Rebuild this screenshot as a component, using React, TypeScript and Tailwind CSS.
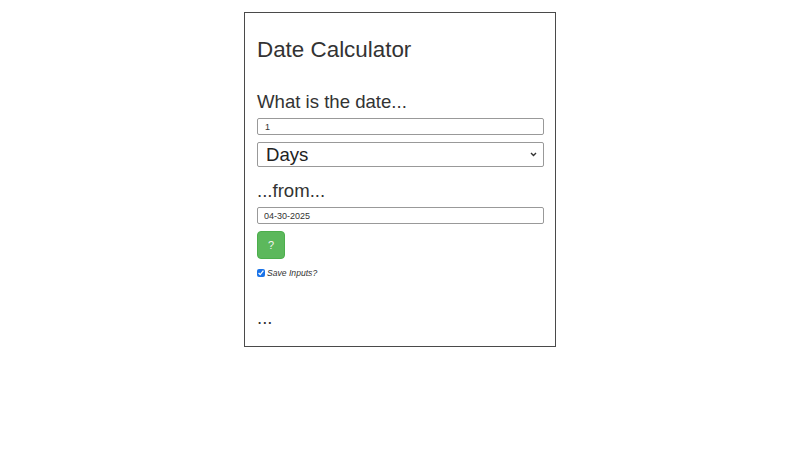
import React from "react";

export default function App() {
  return (
    <div className="w-[800px] h-[450px] bg-white" style={{ fontFamily: '"Liberation Sans", Arial, sans-serif' }}>
      <div className="mx-auto mt-[12px] w-[312px] border border-[#4a4a4a] px-[12px] pb-[18px] text-[#333] flex flex-col items-stretch">
        <h1 className="mt-[24px] text-[22.4px] leading-[26px] h-[26px]">Date Calculator</h1>
        <div className="mt-[28px] text-[18.6px] leading-[21px] h-[21px]">What is the date...</div>
        <input
          type="text"
          defaultValue="1"
          className="mt-[6px] h-[17px] w-[287px] border border-[#999] rounded-[2px] px-[7px] text-[9px] leading-[15px] text-[#333]"
        />
        <div className="relative mt-[7px] w-[287px] h-[25px]">
          <select
            defaultValue="Days"
            className="appearance-none h-[25px] w-[287px] border border-[#999] rounded-[2px] pl-[8px] text-[18.6px] leading-[23px] text-[#222]"
          >
            <option>Days</option>
            <option>Weeks</option>
            <option>Months</option>
            <option>Years</option>
          </select>
          <svg
            className="absolute right-[7px] top-[10px] pointer-events-none"
            width="7"
            height="5"
            viewBox="0 0 7 5"
          >
            <path d="M1 1 L3.5 3.5 L6 1" fill="none" stroke="#333" strokeWidth="1.4" />
          </svg>
        </div>
        <div className="mt-[13px] text-[18.6px] leading-[21px] h-[21px]">...from...</div>
        <input
          type="text"
          defaultValue="04-30-2025"
          className="mt-[6px] h-[17px] w-[287px] border border-[#999] rounded-[2px] px-[6px] text-[9px] leading-[15px] text-[#333]"
        />
        <div className="mt-[7px]">
          <button className="w-[28px] h-[28px] rounded-[4px] bg-[#5cb85c] border border-[#4cae4c] text-[#f4f4f4] text-[11px] leading-none flex items-center justify-center">
            ?
          </button>
        </div>
        <label className="mt-[10px] flex items-center h-[8px] text-[8.6px] italic text-[#333]">
          <input type="checkbox" defaultChecked className="w-[8px] h-[8px] m-0 mr-[2px] accent-[#1a73e8]" />
          Save Inputs?
        </label>
        <div className="mt-[30px] text-[18.6px] leading-[21px] h-[21px]">...</div>
      </div>
    </div>
  );
}
